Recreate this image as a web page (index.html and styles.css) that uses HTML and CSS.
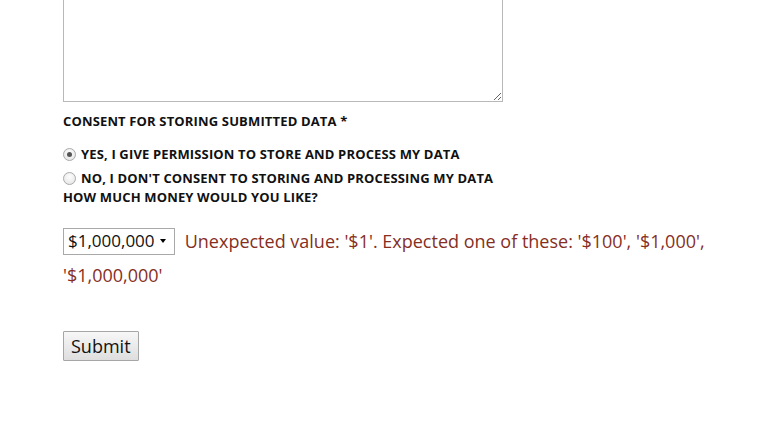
FILE: index.html
```html
<!DOCTYPE html>
<html>
<head>
<meta charset="utf-8">
<link rel="stylesheet" href="styles.css">
</head>
<body>
<form class="form">
  <textarea class="message"></textarea>
  <div class="field">
    <div class="label">Consent for storing submitted data *</div>
    <div class="radios">
      <label class="radio"><input type="radio" name="consent" checked> Yes, I give permission to store and process my data</label>
      <label class="radio"><input type="radio" name="consent"> No, I don't consent to storing and processing my data</label>
    </div>
  </div>
  <div class="field">
    <div class="label">How much money would you like?</div>
    <div class="money">
      <span class="select"><select><option>$1,000,000</option><option>$1,000</option><option>$100</option></select><svg width="6" height="4" viewBox="0 0 6 4"><path d="M0 0H6L3 4Z" fill="#000"/></svg></span>
      <span class="error">Unexpected value: '$1'. Expected one of these: '$100', '$1,000', '$1,000,000'</span>
    </div>
  </div>
  <div class="actions"><button type="button" class="submit">Submit</button></div>
</form>
</body>
</html>
```
FILE: styles.css
```css
html, body { margin: 0; padding: 0; background: #fff; }
body { font-family: "Open Sans", sans-serif; color: #111; overflow: hidden; }
.form { padding-left: 63px; padding-right: 40px; }
.message {
  display: block;
  box-sizing: border-box;
  width: 440px;
  height: 160px;
  margin: -58px 0 0 0;
  border: 1px solid #b8b8b8;
  resize: vertical;
}
.label {
  font-size: 13px;
  font-weight: 700;
  text-transform: uppercase;
  line-height: 16px;
  letter-spacing: 0.15px;
}
.field:first-of-type { margin-top: 11px; }
.radios { margin-top: 14px; display: flex; flex-direction: column; gap: 2px; }
.radio {
  display: flex; align-items: center;
  font-size: 13px; font-weight: 700; text-transform: uppercase; line-height: 22px;
  letter-spacing: 0.15px;
}
.radio input {
  -webkit-appearance: none; appearance: none;
  margin: 0 5px 0 0; width: 13px; height: 13px; box-sizing: border-box;
  border: 1px solid #a9a9a9; border-radius: 50%;
  background: radial-gradient(circle at 50% 35%, #fdfdfd, #e2e2e2);
  display: inline-flex; align-items: center; justify-content: center;
}
.radio input:checked::after {
  content: ""; width: 5px; height: 5px; border-radius: 50%; background: #555;
}
.money { margin-top: 19px; font-size: 18px; line-height: 34px; color: #862f1f; }
.select {
  display: inline-flex; align-items: center;
  border: 1px solid #a9a9a9; height: 27px; box-sizing: border-box;
  width: 112px;
  padding: 0 8px 0 4px; background: #fff; vertical-align: 1px;
  margin-right: 5px;
  justify-content: space-between;
}
.select select {
  appearance: none; -webkit-appearance: none; border: 0; background: transparent;
  font-family: "Open Sans", sans-serif; font-size: 17px; color: #111; padding: 0;
  outline: none; line-height: 22px;
}
.actions { margin-top: 39px; }
.submit {
  font-family: "Open Sans", sans-serif; font-size: 18px; color: #111;
  border: 1px solid #a6a6a6; border-radius: 1px;
  background: linear-gradient(#f7f7f7, #dedede);
  padding: 0 7px; height: 30px; line-height: 26px;
}
```
